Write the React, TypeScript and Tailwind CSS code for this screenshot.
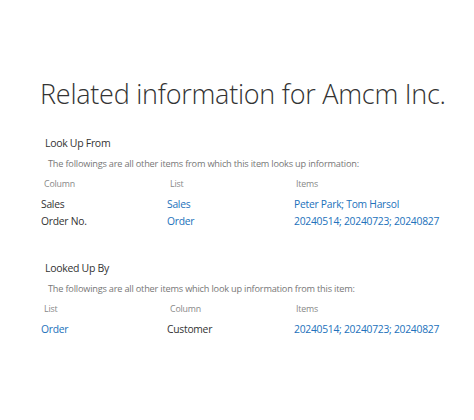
const font = { fontFamily: '"Segoe UI", "Open Sans", "Noto Sans", sans-serif' };

type Cell = { text: string; link?: boolean };

function Section({
    title,
    description,
    headers,
    rows,
    className,
}: {
    title: string;
    description: string;
    headers: string[];
    rows: Cell[][];
    className?: string;
}) {
    return (
        <div className={className}>
            <p className="pl-[45px] h-[20px] leading-[20px] text-[10.5px] tracking-[-0.3px] text-[#333]">{title}</p>
            <p className="mt-px pl-[48px] h-[20px] leading-[20px] text-[9.2px] tracking-[-0.2px] text-[#777] whitespace-nowrap">
                {description}
            </p>
            <div className="pl-[41px] grid grid-cols-[126px_127px_1fr]">
                {headers.map((h, i) => (
                    <p
                        key={i}
                        className={`h-[21px] leading-[21px] text-[8.8px] tracking-[-0.15px] text-[#888] ${i === 2 ? "pl-[2px]" : "pl-[3px]"}`}
                    >
                        {h}
                    </p>
                ))}
                {rows.map((row, r) =>
                    row.map((c, i) => (
                        <p
                            key={`${r}-${i}`}
                            className={`h-[17px] leading-[19px] text-[10.3px] tracking-[-0.25px] whitespace-nowrap ${c.link ? "text-[#2271bb]" : "text-[#333]"}`}
                        >
                            {c.text}
                        </p>
                    ))
                )}
            </div>
        </div>
    );
}

export default function App() {
    return (
        <div className="w-[474px] h-[420px] bg-white overflow-hidden" style={font}>
            <h1 className="pt-[74px] pl-[40px] h-[114px] leading-[40px] text-[27px] tracking-[-0.25px] font-light text-[#333] whitespace-nowrap">
                Related information for Amcm Inc.
            </h1>
            <Section
                className="mt-[19px]"
                title="Look Up From"
                description="The followings are all other items from which this item looks up information:"
                headers={["Column", "List", "Items"]}
                rows={[
                    [{ text: "Sales" }, { text: "Sales", link: true }, { text: "Peter Park; Tom Harsol", link: true }],
                    [{ text: "Order No." }, { text: "Order", link: true }, { text: "20240514; 20240723; 20240827", link: true }],
                ]}
            />
            <Section
                className="mt-[29px]"
                title="Looked Up By"
                description="The followings are all other items which look up information from this item:"
                headers={["List", "Column", "Items"]}
                rows={[
                    [{ text: "Order", link: true }, { text: "Customer" }, { text: "20240514; 20240723; 20240827", link: true }],
                ]}
            />
        </div>
    );
}
